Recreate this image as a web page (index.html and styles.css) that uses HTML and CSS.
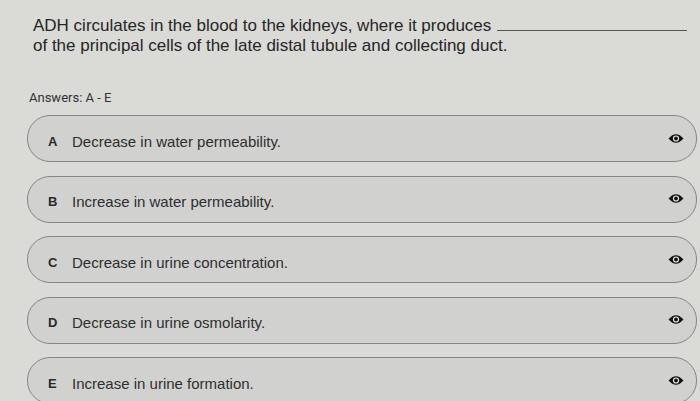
FILE: index.html
```html
<!DOCTYPE html>
<html>
<head>
<meta charset="utf-8">
<link rel="stylesheet" href="styles.css">
</head>
<body>
<div class="page">
  <p class="question">ADH circulates in the blood to the kidneys, where it produces <span class="blank"></span><br>of the principal cells of the late distal tubule and collecting duct.</p>
  <div class="answers">Answers: A - E</div>
  <div class="options">
    <div class="option"><span class="letter">A</span><span class="text">Decrease in water permeability.</span><svg class="eye" viewBox="0 0 16 11"><path d="M0.5 5.5 Q8 -3 15.5 5.5 Q8 14 0.5 5.5Z" fill="#111"/><circle cx="8" cy="5.5" r="3.1" fill="#ececea"/><circle cx="8" cy="5.5" r="1.9" fill="#111"/></svg></div>
    <div class="option"><span class="letter">B</span><span class="text">Increase in water permeability.</span><svg class="eye" viewBox="0 0 16 11"><path d="M0.5 5.5 Q8 -3 15.5 5.5 Q8 14 0.5 5.5Z" fill="#111"/><circle cx="8" cy="5.5" r="3.1" fill="#ececea"/><circle cx="8" cy="5.5" r="1.9" fill="#111"/></svg></div>
    <div class="option"><span class="letter">C</span><span class="text">Decrease in urine concentration.</span><svg class="eye" viewBox="0 0 16 11"><path d="M0.5 5.5 Q8 -3 15.5 5.5 Q8 14 0.5 5.5Z" fill="#111"/><circle cx="8" cy="5.5" r="3.1" fill="#ececea"/><circle cx="8" cy="5.5" r="1.9" fill="#111"/></svg></div>
    <div class="option"><span class="letter">D</span><span class="text">Decrease in urine osmolarity.</span><svg class="eye" viewBox="0 0 16 11"><path d="M0.5 5.5 Q8 -3 15.5 5.5 Q8 14 0.5 5.5Z" fill="#111"/><circle cx="8" cy="5.5" r="3.1" fill="#ececea"/><circle cx="8" cy="5.5" r="1.9" fill="#111"/></svg></div>
    <div class="option"><span class="letter">E</span><span class="text">Increase in urine formation.</span><svg class="eye" viewBox="0 0 16 11"><path d="M0.5 5.5 Q8 -3 15.5 5.5 Q8 14 0.5 5.5Z" fill="#111"/><circle cx="8" cy="5.5" r="3.1" fill="#ececea"/><circle cx="8" cy="5.5" r="1.9" fill="#111"/></svg></div>
  </div>
</div>
</body>
</html>
```
FILE: styles.css
```css
html, body {
  margin: 0;
  padding: 0;
}
body {
  width: 700px;
  height: 401px;
  overflow: hidden;
  background: #dadad7;
  font-family: "Liberation Sans", Arial, sans-serif;
  color: #2c2c2c;
}
.page {
  padding: 16px 0 0 27px;
}
.question {
  margin: 0 0 0 6px;
  font-size: 17px;
  line-height: 20px;
  color: #262626;
}
.blank {
  display: inline-block;
  width: 190px;
  border-bottom: 1px solid #555;
  margin-left: 1px;
  vertical-align: baseline;
}
.answers {
  margin: 34px 0 0 2px;
  font-family: Roboto, "Liberation Sans", sans-serif;
  font-size: 13px;
  line-height: 16px;
  color: #333;
}
.options {
  display: flex;
  flex-direction: column;
  gap: 13.5px;
  margin-top: 9px;
}
.option {
  display: flex;
  align-items: center;
  height: 47px;
  width: 670px;
  border: 1.5px solid #858585;
  border-radius: 23px;
  background: #d1d2d0;
  padding: 5px 0 0 20px;
  box-sizing: border-box;
}
.letter {
  font-weight: bold;
  font-size: 13px;
  width: 24px;
  color: #2a2a2a;
}
.text {
  font-size: 15px;
  color: #2e2e2e;
  flex: 1;
}
.eye {
  width: 16px;
  height: 11px;
  margin-right: 12px;
  margin-top: -6px;
}
```
